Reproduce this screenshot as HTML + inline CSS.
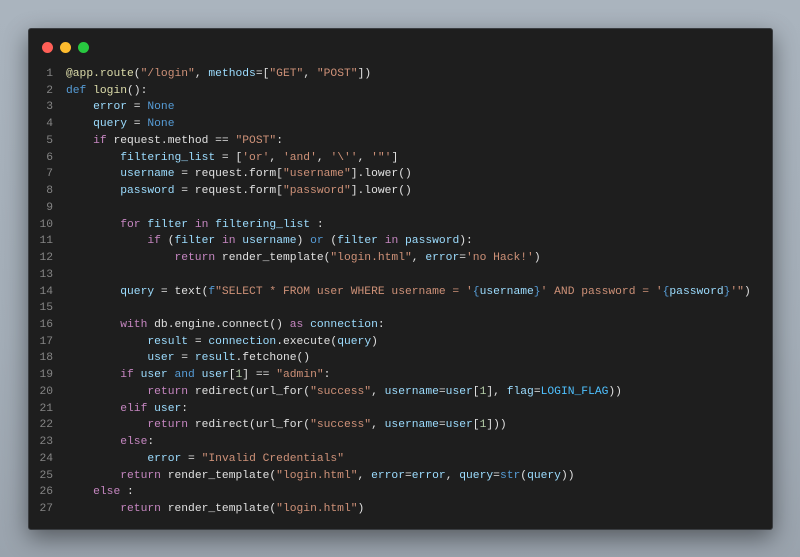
<!DOCTYPE html>
<html><head><meta charset="utf-8"><style>
html,body{margin:0;padding:0;width:800px;height:557px;overflow:hidden}
body{background:linear-gradient(180deg,#aab4be 0%,#a3adb7 60%,#9aa3ad 100%);position:relative}
.win{position:absolute;left:28px;top:28px;width:743px;height:500px;background:#1e1e1e;border:1px solid #3a3d41;border-radius:3px;box-shadow:0 8px 24px rgba(0,0,0,.45)}
.dot{position:absolute;top:13px;width:11px;height:11px;border-radius:50%}
pre{position:absolute;left:0;top:37px;margin:0;font-family:"Liberation Mono",monospace;font-size:11.3px;line-height:16.73px;color:#e0e0e0;white-space:pre}
.n{display:inline-block;width:24px;text-align:right;color:#858585;margin-right:13px}
.k{color:#569cd6}.c{color:#c586c0}.s{color:#ce9178}.v{color:#9cdcfe}.m{color:#b5cea8}.f{color:#dcdcaa}.o{color:#4fc1ff}
</style></head><body>
<div class="win">
<div class="dot" style="left:13px;background:#ff5f57"></div>
<div class="dot" style="left:31px;background:#febc2e"></div>
<div class="dot" style="left:49px;background:#28c840"></div>
<pre><span class="n">1</span><span class="f">@app.route</span>(<span class="s">"/login"</span>, <span class="v">methods</span>=[<span class="s">"GET"</span>, <span class="s">"POST"</span>])
<span class="n">2</span><span class="k">def</span> <span class="f">login</span>():
<span class="n">3</span>    <span class="v">error</span> = <span class="k">None</span>
<span class="n">4</span>    <span class="v">query</span> = <span class="k">None</span>
<span class="n">5</span>    <span class="c">if</span> request.method == <span class="s">"POST"</span>:
<span class="n">6</span>        <span class="v">filtering_list</span> = [<span class="s">'or'</span>, <span class="s">'and'</span>, <span class="s">'\''</span>, <span class="s">'"'</span>]
<span class="n">7</span>        <span class="v">username</span> = request.form[<span class="s">"username"</span>].lower()
<span class="n">8</span>        <span class="v">password</span> = request.form[<span class="s">"password"</span>].lower()
<span class="n">9</span>
<span class="n">10</span>        <span class="c">for</span> <span class="v">filter</span> <span class="c">in</span> <span class="v">filtering_list</span> :
<span class="n">11</span>            <span class="c">if</span> (<span class="v">filter</span> <span class="c">in</span> <span class="v">username</span>) <span class="k">or</span> (<span class="v">filter</span> <span class="c">in</span> <span class="v">password</span>):
<span class="n">12</span>                <span class="c">return</span> render_template(<span class="s">"login.html"</span>, <span class="v">error</span>=<span class="s">'no Hack!'</span>)
<span class="n">13</span>
<span class="n">14</span>        <span class="v">query</span> = text(<span class="k">f</span><span class="s">"SELECT * FROM user WHERE username = '</span><span class="k">{</span><span class="v">username</span><span class="k">}</span><span class="s">' AND password = '</span><span class="k">{</span><span class="v">password</span><span class="k">}</span><span class="s">'"</span>)
<span class="n">15</span>
<span class="n">16</span>        <span class="c">with</span> db.engine.connect() <span class="c">as</span> <span class="v">connection</span>:
<span class="n">17</span>            <span class="v">result</span> = <span class="v">connection</span>.execute(<span class="v">query</span>)
<span class="n">18</span>            <span class="v">user</span> = <span class="v">result</span>.fetchone()
<span class="n">19</span>        <span class="c">if</span> <span class="v">user</span> <span class="k">and</span> <span class="v">user</span>[<span class="m">1</span>] == <span class="s">"admin"</span>:
<span class="n">20</span>            <span class="c">return</span> redirect(url_for(<span class="s">"success"</span>, <span class="v">username</span>=<span class="v">user</span>[<span class="m">1</span>], <span class="v">flag</span>=<span class="o">LOGIN_FLAG</span>))
<span class="n">21</span>        <span class="c">elif</span> <span class="v">user</span>:
<span class="n">22</span>            <span class="c">return</span> redirect(url_for(<span class="s">"success"</span>, <span class="v">username</span>=<span class="v">user</span>[<span class="m">1</span>]))
<span class="n">23</span>        <span class="c">else</span>:
<span class="n">24</span>            <span class="v">error</span> = <span class="s">"Invalid Credentials"</span>
<span class="n">25</span>        <span class="c">return</span> render_template(<span class="s">"login.html"</span>, <span class="v">error</span>=<span class="v">error</span>, <span class="v">query</span>=<span class="k">str</span>(<span class="v">query</span>))
<span class="n">26</span>    <span class="c">else</span> :
<span class="n">27</span>        <span class="c">return</span> render_template(<span class="s">"login.html"</span>)</pre>
</div>
</body></html>
